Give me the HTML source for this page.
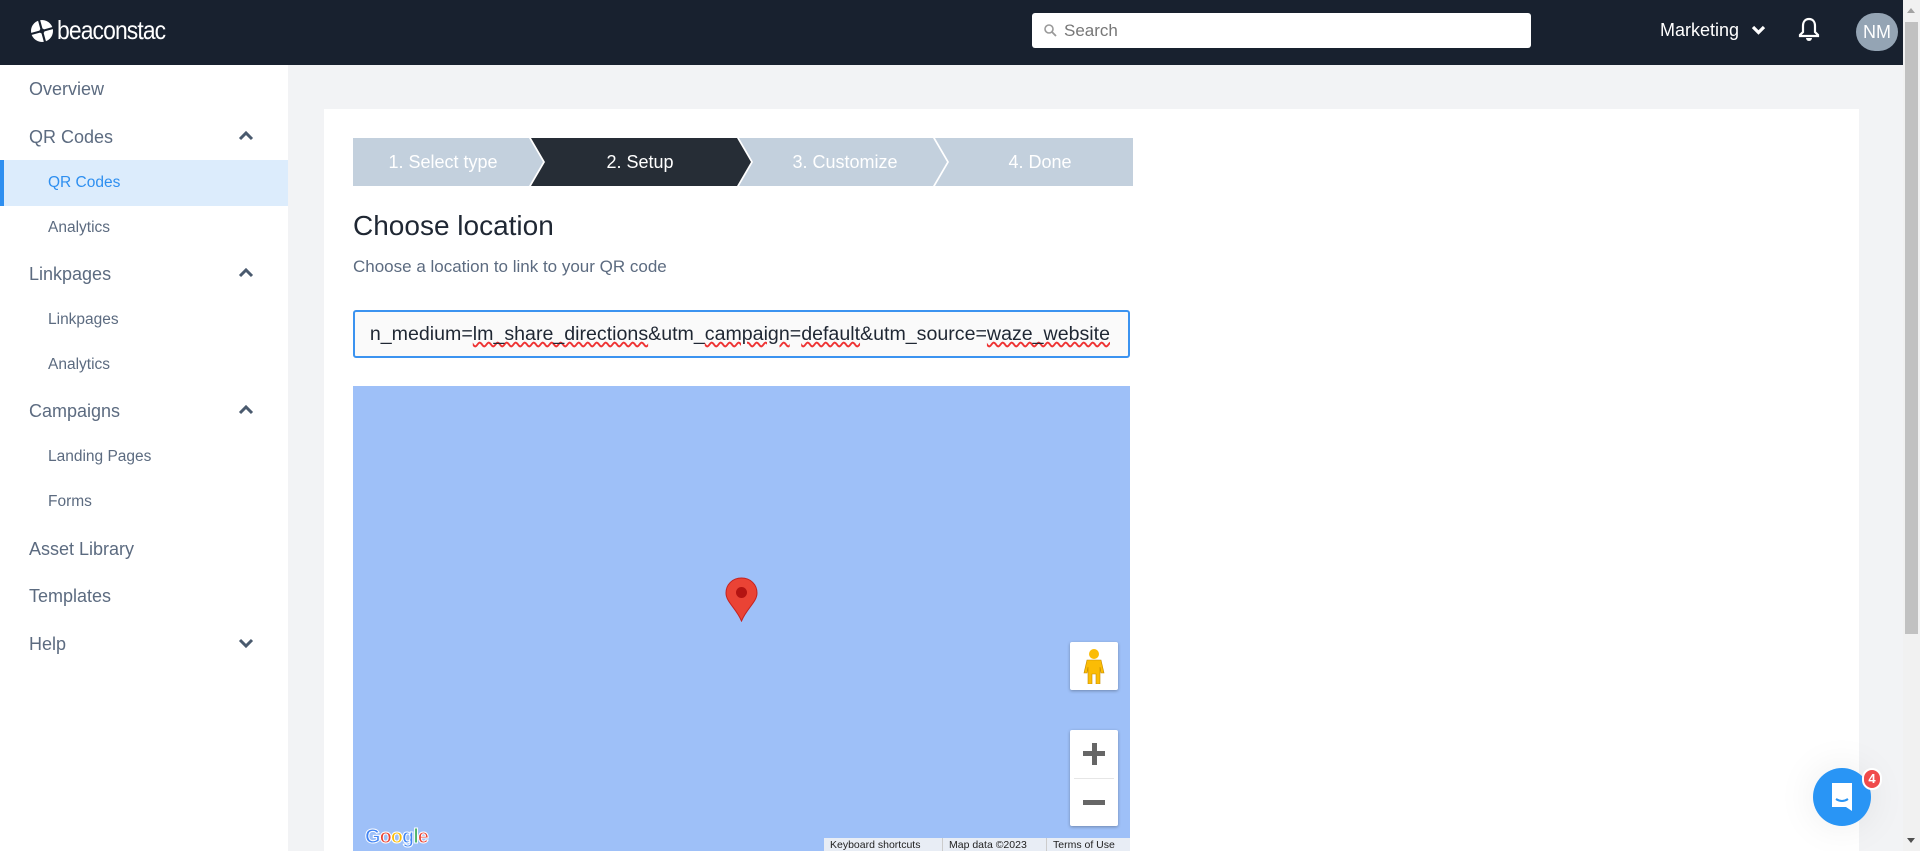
<!DOCTYPE html>
<html style="overflow:hidden"><head><meta charset="utf-8"><style>
*{box-sizing:border-box;margin:0;padding:0}
html,body{width:1920px;height:851px;overflow:hidden}
body{background:#f2f3f5;font-family:"Liberation Sans",sans-serif;position:relative}
.hdr{position:absolute;left:0;top:0;width:1903px;height:65px;background:#18212f}
.side{position:absolute;left:0;top:65px;width:288px;height:786px;background:#fff}
.si{position:absolute;left:29px;font-size:18px;color:#5c6b80}
.ss{position:absolute;left:48px;font-size:15.5px;color:#5c6b80}
.chev{position:absolute;left:238px;width:16px;height:10px}
.card{position:absolute;left:324px;top:109px;width:1535px;height:742px;background:#fff}
.step{position:absolute;top:138px;height:48px;color:#fff;font-size:18px;line-height:48px;text-align:center}
.sb{position:absolute;left:1903px;top:0;width:17px;height:851px;background:#f1f1f1}
</style></head><body>
<div class="hdr">
 <svg style="position:absolute;left:30px;top:19px" width="24" height="24" viewBox="0 0 24 24"><circle cx="12" cy="12" r="11" fill="#fff"/><g stroke="#18212f" stroke-width="2.2"><path d="M12 12 L9 1"/><path d="M12 12 L23 9"/><path d="M12 12 L15 23"/><path d="M12 12 L1 15"/></g><circle cx="12" cy="12" r="2.5" fill="#18212f"/></svg>
 <div style="position:absolute;left:57px;top:15px;color:#fff;font-size:26px;letter-spacing:-1px;transform:scaleX(.88);transform-origin:0 0">beaconstac</div>
 <div style="position:absolute;left:1032px;top:13px;width:499px;height:35px;background:#fff;border-radius:3px">
  <svg style="position:absolute;left:12px;top:11px" width="13" height="13" viewBox="0 0 13 13"><circle cx="5" cy="5" r="4" fill="none" stroke="#999" stroke-width="1.6"/><path d="M8 8l4 4" stroke="#999" stroke-width="1.8"/></svg>
  <span style="position:absolute;left:32px;top:8px;font-size:17px;color:#777">Search</span></div>
 <div style="position:absolute;left:1660px;top:20px;color:#fff;font-size:18px">Marketing</div>
 <svg style="position:absolute;left:1751px;top:25px" width="15" height="11" viewBox="0 0 15 11"><path d="M2 2l5.5 5.5L13 2" stroke="#fff" stroke-width="3.2" fill="none"/></svg>
 <svg style="position:absolute;left:1798px;top:17px" width="22" height="26" viewBox="0 0 22 26"><path d="M11 2c-4 0-6 3-6 7v6l-3 3v1h18v-1l-3-3V9c0-4-2-7-6-7z" fill="none" stroke="#fff" stroke-width="2.2"/><path d="M8 21a3 3 0 006 0z" fill="#fff"/></svg>
 <div style="position:absolute;left:1856px;top:13px;width:42px;height:38px;border-radius:20px;background:#94a4b4;color:#fff;font-size:18px;line-height:38px;text-align:center">NM</div>
</div>
<div class="side">
 <div class="si" style="top:14px">Overview</div>
 <div class="si" style="top:62px">QR Codes</div>
 <svg class="chev" style="top:66px" viewBox="0 0 16 10"><path d="M2 8l6-6 6 6" stroke="#4a5a6e" stroke-width="3" fill="none"/></svg>
 <div style="position:absolute;left:0;top:95px;width:288px;height:46px;background:#dcecfc;border-left:4px solid #2e8ff0"></div>
 <div class="ss" style="top:109px;color:#2e8ff0">QR Codes</div>
 <div class="ss" style="top:154px">Analytics</div>
 <div class="si" style="top:199px">Linkpages</div>
 <svg class="chev" style="top:203px" viewBox="0 0 16 10"><path d="M2 8l6-6 6 6" stroke="#4a5a6e" stroke-width="3" fill="none"/></svg>
 <div class="ss" style="top:246px">Linkpages</div>
 <div class="ss" style="top:291px">Analytics</div>
 <div class="si" style="top:336px">Campaigns</div>
 <svg class="chev" style="top:340px" viewBox="0 0 16 10"><path d="M2 8l6-6 6 6" stroke="#4a5a6e" stroke-width="3" fill="none"/></svg>
 <div class="ss" style="top:383px">Landing Pages</div>
 <div class="ss" style="top:428px">Forms</div>
 <div class="si" style="top:474px">Asset Library</div>
 <div class="si" style="top:521px">Templates</div>
 <div class="si" style="top:569px">Help</div>
 <svg class="chev" style="top:573px" viewBox="0 0 16 10"><path d="M2 2l6 6 6-6" stroke="#4a5a6e" stroke-width="3" fill="none"/></svg>
</div>
<div class="card"></div>
<svg style="position:absolute;left:353px;top:138px" width="780" height="48" viewBox="0 0 780 48">
 <path d="M0 0H176L190 24L176 48H0Z" fill="#c3d0dd"/>
 <path d="M178 0H384L398 24L384 48H178L192 24Z" fill="#262d36"/>
 <path d="M386 0H580L594 24L580 48H386L400 24Z" fill="#c3d0dd"/>
 <path d="M582 0H780V48H582L596 24Z" fill="#c3d0dd"/>
</svg>
<div class="step" style="left:353px;width:180px">1. Select type</div>
<div class="step" style="left:545px;width:190px">2. Setup</div>
<div class="step" style="left:745px;width:200px">3. Customize</div>
<div class="step" style="left:945px;width:190px">4. Done</div>
<div style="position:absolute;left:353px;top:210px;font-size:28px;color:#1f2733">Choose location</div>
<div style="position:absolute;left:353px;top:257px;font-size:17px;color:#5c6b80">Choose a location to link to your QR code</div>
<div style="position:absolute;left:353px;top:310px;width:777px;height:48px;border:2px solid #3b93f0;border-radius:3px;background:#fafafa;overflow:hidden">
 <div style="position:absolute;right:18px;top:11px;font-size:19.6px;color:#1f2733;white-space:nowrap">n_medium=<u style="text-decoration:underline wavy #e33">lm_share_directions</u>&amp;utm_<u style="text-decoration:underline wavy #e33">campaign</u>=<u style="text-decoration:underline wavy #e33">default</u>&amp;utm_source=<u style="text-decoration:underline wavy #e33">waze_website</u></div></div>
<div style="position:absolute;left:353px;top:386px;width:777px;height:465px;background:#9ec0f8">
 <svg style="position:absolute;left:372px;top:191px" width="33" height="45" viewBox="0 0 33 45"><path d="M16.5 1C7.5 1 1 7.5 1 16c0 9 10 15 15.5 28C22 31 32 25 32 16 32 7.5 25.5 1 16.5 1z" fill="#ea4335" stroke="#c5221f"/><circle cx="16.5" cy="15.5" r="5.5" fill="#b31412"/></svg>
 <div style="position:absolute;left:717px;top:256px;width:48px;height:48px;background:#fff;border-radius:2px;box-shadow:0 1px 3px rgba(0,0,0,.3)">
  <svg style="position:absolute;left:12px;top:6px" width="24" height="36" viewBox="0 0 24 36"><circle cx="12" cy="6" r="5" fill="#fbbc05"/><path d="M5 12h14l3 13h-3l-1-6v17h-4v-10h-4v10h-4V19l-1 6H2z" fill="#fbbc05" stroke="#c48a00" stroke-width=".6"/></svg></div>
 <div style="position:absolute;left:717px;top:344px;width:48px;height:96px;background:#fff;border-radius:2px;box-shadow:0 1px 3px rgba(0,0,0,.3)">
  <div style="position:absolute;left:13px;top:21px;width:22px;height:5px;background:#666"></div>
  <div style="position:absolute;left:21.5px;top:13px;width:5px;height:22px;background:#666"></div>
  <div style="position:absolute;left:4px;top:48px;width:40px;height:1px;background:#e6e6e6"></div>
  <div style="position:absolute;left:13px;top:70px;width:22px;height:5px;background:#666"></div>
 </div>
 <div style="position:absolute;left:12px;top:440px;font-size:20px;font-weight:bold;letter-spacing:-1px;-webkit-text-stroke:1px #fff"><span style="color:#4285f4">G</span><span style="color:#ea4335">o</span><span style="color:#fbbc05">o</span><span style="color:#4285f4">g</span><span style="color:#34a853">l</span><span style="color:#ea4335">e</span></div>
 <div style="position:absolute;left:471px;top:452px;width:306px;height:13px;background:rgba(245,245,245,.85);font-size:10.5px;color:#222;line-height:14px;white-space:nowrap">
  <span style="position:absolute;left:6px">Keyboard shortcuts</span><span style="position:absolute;left:118px;top:0;width:1px;height:13px;background:#ccc"></span>
  <span style="position:absolute;left:125px">Map data ©2023</span><span style="position:absolute;left:222px;top:0;width:1px;height:13px;background:#ccc"></span>
  <span style="position:absolute;left:229px">Terms of Use</span></div>
</div>
<div style="position:absolute;left:1813px;top:768px;width:58px;height:58px;border-radius:50%;background:#2995f5;box-shadow:0 0 40px rgba(0,0,0,.08)">
 <svg style="position:absolute;left:16px;top:14px" width="26" height="30" viewBox="0 0 26 30"><path d="M3 1h20v28l-6-4H3z" fill="#fff"/><path d="M7 17q6 4 12 0" stroke="#2995f5" stroke-width="2" fill="none"/></svg></div>
<div style="position:absolute;left:1862px;top:768px;width:20px;height:22px;border-radius:11px;background:#f04b4b;border:2px solid #fff;color:#fff;font-size:13px;font-weight:bold;line-height:18px;text-align:center">4</div>
<div class="sb">
 <div style="position:absolute;left:4px;top:8px;width:0;height:0;border-left:4px solid transparent;border-right:4px solid transparent;border-bottom:5px solid #a3a3a3"></div>
 <div style="position:absolute;left:2px;top:22px;width:13px;height:612px;background:#c1c1c1"></div>
 <div style="position:absolute;left:4px;top:838px;width:0;height:0;border-left:4px solid transparent;border-right:4px solid transparent;border-top:5px solid #505050"></div>
</div>
</body></html>
